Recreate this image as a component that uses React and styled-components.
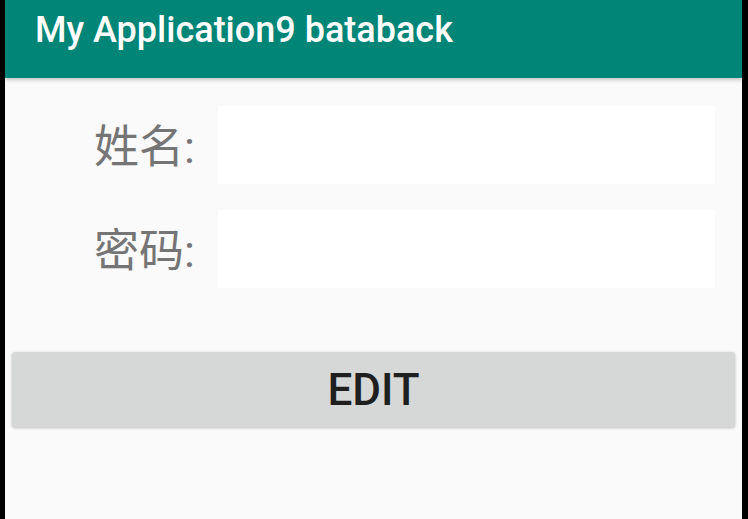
import styled, { createGlobalStyle } from "styled-components";

const GlobalStyle = createGlobalStyle`
  html, body {
    margin: 0;
    padding: 0;
    background: #000;
  }
  #root {
    height: 519px;
  }
`;

export default function App() {
  return (
    <>
      <GlobalStyle />
      <Frame>
        <Screen>
          <Toolbar>
            <Title>My Application9 bataback</Title>
          </Toolbar>
          <Form>
            <Row>
              <Label>姓名:</Label>
              <Field type="text" />
            </Row>
            <Row>
              <Label>密码:</Label>
              <Field type="password" />
            </Row>
          </Form>
          <EditButton>EDIT</EditButton>
        </Screen>
      </Frame>
    </>
  );
}

const Frame = styled.div`
  height: 519px;
  padding: 0 6px 0 5px;
  background: #000;
  box-sizing: border-box;
  overflow: hidden;
`;

const Screen = styled.div`
  height: 100%;
  background: #fafafa;
  display: flex;
  flex-direction: column;
`;

const Toolbar = styled.header`
  height: 78px;
  flex-shrink: 0;
  background: #008577;
  box-shadow: 0 2px 4px rgba(0, 0, 0, 0.22);
  padding: 9px 0 0 30px;
  box-sizing: border-box;
  position: relative;
  z-index: 1;
`;

const Title = styled.h1`
  margin: 0;
  font-family: Roboto, "Liberation Sans", sans-serif;
  font-weight: 500;
  font-size: 36px;
  line-height: 42px;
  color: #fff;
`;

const Form = styled.div`
  display: flex;
  flex-direction: column;
  gap: 26px;
  padding: 28px 27px 0 0;
`;

const Row = styled.div`
  display: flex;
  align-items: center;
  height: 78px;
`;

const Label = styled.span`
  width: 213px;
  flex-shrink: 0;
  box-sizing: border-box;
  padding-right: 23px;
  text-align: right;
  font-family: Roboto, "Noto Sans CJK SC", sans-serif;
  font-size: 45px;
  color: #757575;
  line-height: 1;
  padding-top: 4px;
`;

const Field = styled.input`
  flex: 1;
  height: 78px;
  border: none;
  outline: none;
  background: #fff;
  padding: 0 10px;
  font-family: Roboto, sans-serif;
  font-size: 32px;
`;

const EditButton = styled.button`
  margin: 64px 7px 0 7px;
  height: 75px;
  border: none;
  border-radius: 3px;
  background: #d6d7d7;
  box-shadow: 0 1px 3px rgba(0, 0, 0, 0.25);
  font-family: Roboto, "Liberation Sans", sans-serif;
  font-weight: 500;
  font-size: 44px;
  color: #1f1f1f;
  padding: 0;
  cursor: pointer;
`;
